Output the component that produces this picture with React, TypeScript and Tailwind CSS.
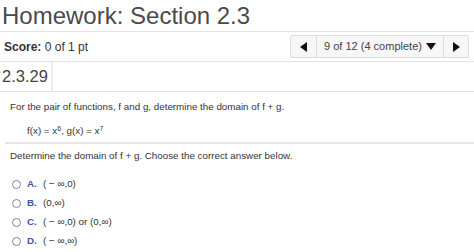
export default function App() {
  const options = [
    { letter: 'A.', text: '( − ∞,0)' },
    { letter: 'B.', text: '(0,∞)' },
    { letter: 'C.', text: '( − ∞,0) or (0,∞)' },
    { letter: 'D.', text: '( − ∞,∞)' },
  ];

  return (
    <div className="w-[474px] h-[252px] overflow-hidden bg-white text-[#333] font-['Liberation_Sans',Arial,sans-serif]">
      {/* Title */}
      <div className="h-[31px] pl-[2px] flex items-center">
        <h1 className="text-[24px] leading-none text-[#4a4a4a]">Homework: Section 2.3</h1>
      </div>

      {/* Score row */}
      <div className="h-[31px] border-t border-b border-[#e3e3e3] flex items-center justify-between pl-[4px] pr-[5px]">
        <p className="text-[12px]">
          <span className="font-bold">Score:</span> 0 of 1 pt
        </p>
        <div className="flex h-[23px] border border-[#dcdcdc] rounded-[2px] bg-[#f7f7f7]">
          <button className="w-[26px] flex items-center justify-center border-r border-[#dcdcdc]">
            <svg width="7" height="10" viewBox="0 0 7 10"><path d="M7 0 L0 5 L7 10 Z" fill="#111" /></svg>
          </button>
          <button className="w-[127px] flex items-center justify-center gap-[4px] text-[11px] text-[#444] border-r border-[#dcdcdc]">
            9 of 12 (4 complete)
            <svg width="10" height="7" viewBox="0 0 10 7"><path d="M0 0 L10 0 L5 7 Z" fill="#111" /></svg>
          </button>
          <button className="w-[24px] flex items-center justify-center">
            <svg width="7" height="10" viewBox="0 0 7 10"><path d="M0 0 L7 5 L0 10 Z" fill="#111" /></svg>
          </button>
        </div>
      </div>

      {/* Question number */}
      <div className="h-[30px] border-b border-[#e3e3e3] flex">
        <div className="w-[53px] border-r-2 border-[#ececec] pl-[2px] flex items-center text-[16.5px] text-[#444]">2.3.29</div>
      </div>

      {/* Question body */}
      <div className="pl-[10px] pt-[9px] text-[9.8px] text-[#333]">
        <p className="h-[12px] leading-[12px]">For the pair of functions, f and g, determine the domain of f + g.</p>
        <p className="pl-[17px] mt-[11px] h-[14px] leading-[14px]">
          f(x) = x<sup className="text-[7px]">6</sup>, g(x) = x<sup className="text-[7px]">7</sup>
        </p>
      </div>
      <div className="ml-[5px] mt-[4px] border-t-2 border-[#e6e6e6]"></div>
      <p className="pl-[10px] mt-[6px] text-[9.8px] leading-[12px]">Determine the domain of f + g. Choose the correct answer below.</p>

      {/* Options */}
      <div className="mt-[16px] flex flex-col gap-[7px] pl-[12px]">
        {options.map((o) => (
          <div key={o.letter} className="flex items-center h-[12px] text-[9.8px]">
            <span className="w-[9px] h-[9px] rounded-full border border-[#7b86a8] bg-white"></span>
            <span className="ml-[6px] w-[16px] font-bold text-[#3c56a0]">{o.letter}</span>
            <span>{o.text}</span>
          </div>
        ))}
      </div>
    </div>
  );
}
